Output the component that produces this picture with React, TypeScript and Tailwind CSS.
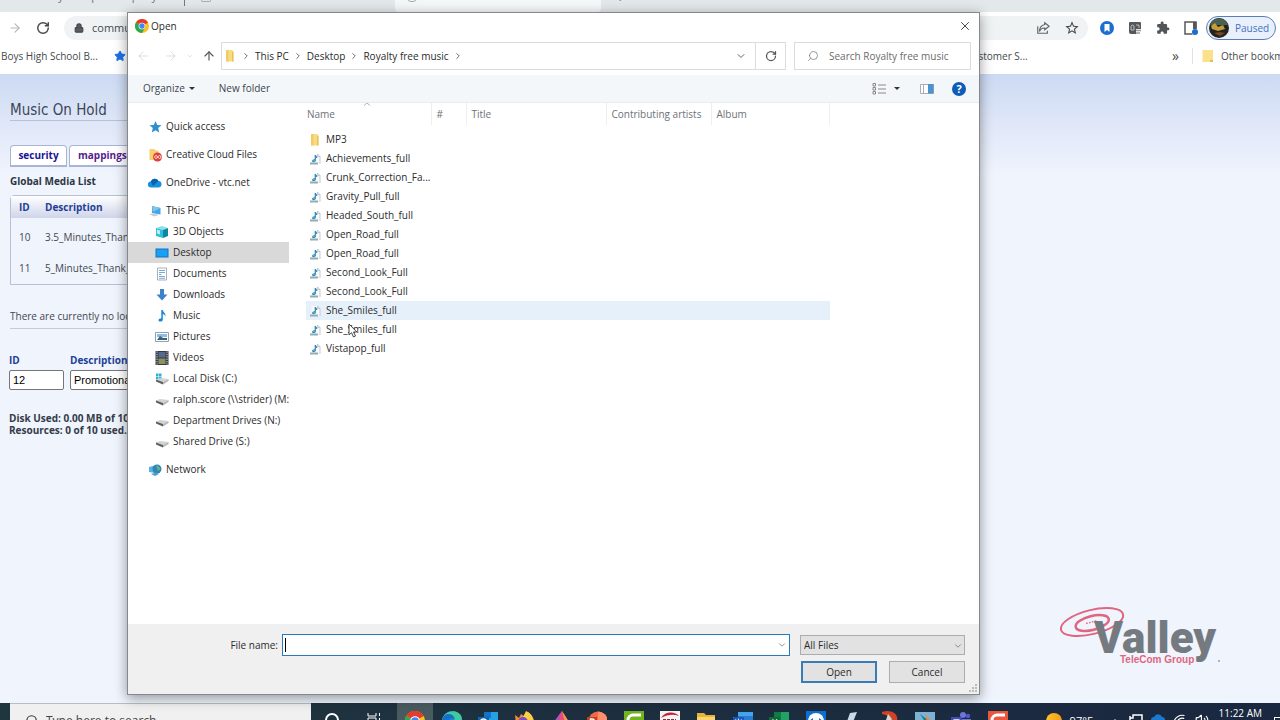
import type { ReactNode } from "react";
import {
  ArrowLeft,
  ArrowRight,
  ArrowUp,
  ChevronDown,
  ChevronRight,
  ChevronUp,
  Lock,
  RotateCw,
  Search,
  Star,
  Volume2,
  Wifi,
  X,
} from "lucide-react";
import { MdExtension, MdOutlineStarBorder } from "react-icons/md";

// ---------- Icons ----------

const ChromeIcon = ({ className = "" }: { className?: string }) => (
  <svg viewBox="0 0 20 20" className={className}>
    <circle cx="10" cy="10" r="10" fill="#fbc116" />
    <path d="M10 10L1.3 5A10 10 0 0 1 18.7 5z" fill="#e33b2e" />
    <path d="M10 10L1.3 5A10 10 0 0 0 10 20l4-7z" fill="#2da94f" />
    <circle cx="10" cy="10" r="4.8" fill="#fff" />
    <circle cx="10" cy="10" r="3.8" fill="#4285f4" />
  </svg>
);

const FolderIcon = () => (
  <svg viewBox="0 0 14 14" className="size-3.5 shrink-0">
    <path d="M3 1h6l1.500 1V12.500H3z" fill="#f8dc83" />
    <path d="M3 1h2.500v11.500H3z" fill="#f1cd63" />
    <path d="M9 3h1.500v9.500H9z" fill="#e9c15c" />
  </svg>
);

const AudioFileIcon = () => (
  <svg viewBox="0 0 14 14" className="size-3.5 shrink-0">
    <path d="M3.500 2h6L12 4.500V12H3.500z" fill="#f8fafb" />
    <path d="M9.500 2L12 4.500V12M9.500 2v2.500H12" fill="none" stroke="#b4bfc5" strokeWidth=".8" />
    <path d="M7.300 3v5.500c0 1-2.600 1.600-2.600.4 0-.9 1.300-1.200 2.600-.8M7.300 3c.2 1.500 1.700 1.400 1.400 3" fill="none" stroke="#2f87b8" strokeWidth="1.200" />
    <path d="M2 10.500h8v2H2z" fill="#93acb3" />
  </svg>
);

const DriveIcon = ({ windows = false }: { windows?: boolean }) => (
  <svg viewBox="0 0 14 14" className="size-3.5 shrink-0">
    {windows && <path d="M1 1.500h2.500V4H1zM4 1.500h2.500V4H4zM1 4.500h2.500V7H1zM4 4.500h2.500V7H4z" fill="#2cb3c9" />}
    <path d="M1 7.500l4-1.500 8.500 1L8 10z" fill="#d0d2d3" />
    <path d="M1 7.500l7 2.500v2.500L1 9.500z" fill="#5c5f61" />
    <path d="M8 10l5.500-3v2L8 12.500z" fill="#b4b7b8" />
  </svg>
);

const navIcons: Record<string, ReactNode> = {
  quick: <path d="M7.500 1l1.700 4 4.300.3-3.300 2.800 1 4.400-3.700-2.300-3.700 2.300 1-4.400L1.500 5.300 5.800 5z" fill="#2f8ed0" />,
  creative: (
    <>
      <path d="M1.500 1h5l1 1.500h3V12h-9z" fill="#f6d071" />
      <circle cx="9.500" cy="9" r="4.500" fill="#df4137" />
      <path d="M7 10a1.500 1.500 0 0 1 1-2.500c1.500 0 2 3 3.500 3a1.500 1.500 0 0 0 0-3c-1.500 0-2 3-3.500 3z" fill="none" stroke="#fff" strokeWidth=".8" />
    </>
  ),
  onedrive: (
    <>
      <path d="M3 11.500a3 3 0 0 1-.2-6A4.300 4.300 0 0 1 10.500 5a3.300 3.300 0 0 1 .5 6.500z" fill="#1490df" />
      <path d="M2.800 5.500A4.300 4.300 0 0 1 10.500 5L5 10z" fill="#0864b1" />
    </>
  ),
  pc: (
    <>
      <path d="M4 2l8.500 2v6.500L4 9z" fill="#42a5df" />
      <path d="M4 2l8.500 2L5 8z" fill="#79c6ee" />
      <path d="M1 10l5-.5 5 1.500-5 1.500z" fill="#c4cdd3" />
    </>
  ),
  objects: (
    <>
      <path d="M1 3l6-2 6 2-5 2z" fill="#8adfe9" />
      <path d="M1 3l7 2v8l-7-2z" fill="#2bc0d6" />
      <path d="M8 5l5-2v8l-5 2z" fill="#1283a3" />
      <path d="M2 4.500l3 1v4l-3-1z" fill="#bdf0f5" />
    </>
  ),
  desktop: (
    <>
      <path d="M.5 2.500h13v9H.5z" fill="#1272c4" />
      <path d="M1.500 3.500h11v7h-11z" fill="#18a0f2" />
    </>
  ),
  documents: (
    <>
      <path d="M2.500 1h9v12h-9z" fill="#fff" stroke="#a5b1ba" />
      <path d="M4 3.500h6M4 5.500h6M4 7.500h2.500M4 9.500h6M4 11.300h6" stroke="#6f9dc5" strokeWidth=".9" />
    </>
  ),
  downloads: <path d="M5 1h4v5.500h3.500L7 12.500 1.500 6.500H5z" fill="#3c82cb" />,
  music: <path d="M6.300 1h1.500c.2 2.500 3.500 3 2.400 6.500C9.800 5.500 8.500 5.300 7.800 5v5.700c0 2-4.300 2.800-4.300.6 0-1.500 1.600-2 2.800-1.700z" fill="#1886d1" />,
  pictures: (
    <>
      <path d="M.5 2.500h13v9H.5z" fill="#fff" stroke="#95a1aa" />
      <path d="M2 4h10v3H2z" fill="#8dbce5" />
      <path d="M2 10l3-4 3 2h4v2z" fill="#38617e" />
    </>
  ),
  videos: (
    <>
      <path d="M.5 0h13v14H.5z" fill="#343a43" />
      <path d="M3.500 1h7v5.500h-7z" fill="#57698e" />
      <path d="M3.500 7.500h7V13h-7z" fill="#8c925c" />
      <path d="M2 .5v13M12 .5v13" stroke="#e5e7e9" strokeDasharray="1.200 1.200" />
    </>
  ),
  network: (
    <>
      <path d="M1 4l6-1.500V10L1 9z" fill="#58b1df" />
      <circle cx="9" cy="6" r="4.500" fill="#2f86b7" />
      <path d="M8 2c2 1 4 2 4.500 4L10 8z" fill="#68b288" />
      <path d="M3 11l5-1.500 3 1.500-4 2z" fill="#4c9fcf" />
    </>
  ),
};

const NavIcon = ({ name }: { name: string }) => {
  if (name === "drive" || name === "local") return <DriveIcon windows={name === "local"} />;
  return (
    <svg viewBox="0 0 14 14" className="size-3.5 shrink-0">
      {navIcons[name]}
    </svg>
  );
};

// ---------- Data ----------

const navGroups = [
  [{ icon: "quick", label: "Quick access" }],
  [{ icon: "creative", label: "Creative Cloud Files" }],
  [{ icon: "onedrive", label: "OneDrive - vtc.net" }],
  [
    { icon: "pc", label: "This PC" },
    { icon: "objects", label: "3D Objects", child: true },
    { icon: "desktop", label: "Desktop", child: true, active: true },
    { icon: "documents", label: "Documents", child: true },
    { icon: "downloads", label: "Downloads", child: true },
    { icon: "music", label: "Music", child: true },
    { icon: "pictures", label: "Pictures", child: true },
    { icon: "videos", label: "Videos", child: true },
    { icon: "local", label: "Local Disk (C:)", child: true },
    { icon: "drive", label: "ralph.score (\\\\strider) (M:", child: true },
    { icon: "drive", label: "Department Drives (N:)", child: true },
    { icon: "drive", label: "Shared Drive (S:)", child: true },
  ],
  [{ icon: "network", label: "Network" }],
] as { icon: string; label: string; child?: boolean; active?: boolean }[][];

const files = [
  "MP3",
  "Achievements_full",
  "Crunk_Correction_Fa...",
  "Gravity_Pull_full",
  "Headed_South_full",
  "Open_Road_full",
  "Open_Road_full",
  "Second_Look_Full",
  "Second_Look_Full",
  "She_Smiles_full",
  "She_Smiles_full",
  "Vistapop_full",
];
const hoveredFile = 9;

const taskbarApps: ReactNode[] = [
  <>
    <circle cx="10" cy="10" r="10" fill="#1a88cf" />
    <path d="M0 10C1-2 19-3 20 8c0 4-6 5-7 2-1-5-9-5-13 0z" fill="#41c9a0" />
    <path d="M0 10C1 1 11 1 13 8c-5-3-9 2-6 11-5-1-7-5-7-9z" fill="#1671c6" />
  </>,
  <>
    <path d="M6 1h14v15H6z" fill="#28a1e4" />
    <path d="M6 1h7v6H6z" fill="#1274c4" />
    <path d="M0 6h11v11H0z" fill="#0d63b4" />
    <circle cx="5.500" cy="11" r="3" fill="none" stroke="#fff" strokeWidth="1.500" />
  </>,
  <>
    <path d="M1 4l4 3 2-4 4 3 3-5c4 3 7 7 6 12a9 9 0 0 1-18 0z" fill="#fa8b2b" />
    <path d="M12 0c5 2 8 7 7 12l-6 3c1-5-2-7-4-9z" fill="#fdcf42" />
    <circle cx="9" cy="11" r="5" fill="#7650c8" />
  </>,
  <>
    <path d="M11 0l7 11c0 9-15 9-15 0z" fill="#ea4c78" />
    <path d="M11 0L8 11 3 11z" fill="#aa58b5" />
    <path d="M11 0l3 11h4z" fill="#f69a4b" />
  </>,
  <>
    <circle cx="11" cy="10" r="9.500" fill="#ed6c47" />
    <path d="M11 .5a9.500 9.500 0 0 1 9.500 9.500H11z" fill="#ff8f6b" />
    <path d="M0 6h10v10H0z" fill="#c43e1c" />
    <path d="M3.500 14V8h2a1.800 1.800 0 0 1 0 3.600h-2" fill="none" stroke="#fff" strokeWidth="1.400" />
  </>,
  <>
    <path d="M0 0h20v20H0z" fill="#70b51f" />
    <path d="M17 4H9a5 5 0 0 0-5 5v6" fill="none" stroke="#fff" strokeWidth="3" />
  </>,
  <>
    <path d="M0 0h20v20H0z" fill="#f6f3f3" />
    <path d="M1 7c4-7 14-7 18-2-5-2-11-2-18 2z" fill="#c42138" />
    <path d="M3 9h13M3 11h13" stroke="#83323c" strokeWidth="2" strokeDasharray="3 1" />
  </>,
  <>
    <path d="M1 2h7l2 2h9v14H1z" fill="#e8b33b" />
    <path d="M1 6h18v12H1z" fill="#fbd66f" />
  </>,
  <>
    <path d="M5 1h15v16H5z" fill="#2b7cd3" />
    <path d="M5 1h15v4H5z" fill="#41a5ee" />
    <path d="M0 6h11v11H0z" fill="#185abd" />
    <path d="M2.500 8.500L4 14l1.500-5L7 14l1.500-5.500" fill="none" stroke="#fff" strokeWidth="1.200" />
  </>,
  <>
    <path d="M5 1h15v16H5z" fill="#21a366" />
    <path d="M5 1h7v8H5z" fill="#107c41" />
    <path d="M0 6h11v11H0z" fill="#0e6b38" />
    <path d="M3.500 8.500L8 14M8 8.500L3.500 14" stroke="#fff" strokeWidth="1.400" />
  </>,
  <>
    <path d="M0 0h20v20H0z" fill="#0f6fd1" />
    <circle cx="10" cy="10" r="8" fill="#fff" />
    <path d="M3 10l4-3v2h6V7l4 3-4 3v-2H7v2z" fill="#0f6fd1" />
  </>,
  <path d="M8 2l7-1-6 15H3z" fill="#c9d9e8" />,
  <>
    <path d="M3 1c8-3 17 1 15 9-2 5-6 7-9 7 8-7 4-12-6-14z" fill="#cf4424" />
    <path d="M9 3l4 5-3 6-3-5z" fill="#d9d5d1" />
  </>,
  <>
    <path d="M0 1h20v16H0z" fill="#7cb2d6" />
    <path d="M5 3l9 7v7z" fill="#177e94" />
    <path d="M10 3l6 7-3 4z" fill="#ea883d" />
  </>,
  <>
    <circle cx="12" cy="4" r="3" fill="#6d76d4" />
    <circle cx="17" cy="5" r="2.200" fill="#5059c9" />
    <path d="M6 8h14v9H6z" fill="#6d76d4" />
    <path d="M0 6h11v11H0z" fill="#444bb5" />
    <path d="M2.500 9h6M5.500 9v6" stroke="#fff" strokeWidth="1.500" />
  </>,
  <>
    <path d="M0 0h20v20H0z" fill="#e9573f" />
    <path d="M17 4H9a5 5 0 0 0-5 5v6" fill="none" stroke="#fff" strokeWidth="3" />
  </>,
];

// ---------- Browser window ----------

const BrowserChrome = () => (
  <header className="shrink-0 text-[#45494d]">
    <div className="flex h-3 overflow-hidden bg-[#e3e8ea] pl-1 text-[11px] leading-4">
      <span className="-mt-3 w-[180px] shrink-0 text-[#777]">Community · Simple company</span>
      <div className="mr-4 h-1.5 border-l border-[#777]" />
      <div className="h-0.5 w-2.5 rounded-b border border-t-0 border-[#aaa]" />
      <div className="-mt-1 ml-[184px] flex h-4 w-[206px] items-start rounded-b bg-[#f5f8f9] pl-3">
        <div className="h-1.5 w-2.5 rounded-b border border-[#aaa]" />
      </div>
      <span className="-mt-2.5 ml-4">+</span>
    </div>

    <div className="flex h-8 items-center bg-white pl-2">
      <ArrowRight className="size-3.5 shrink-0 text-[#b5b7ba]" strokeWidth={2} />
      <button aria-label="Reload" className="ml-3.5 shrink-0">
        <RotateCw className="size-3.5 text-[#45484b]" strokeWidth={2.5} />
      </button>
      <div className="ml-3.5 flex h-6 flex-1 items-center rounded-full bg-[#f0f3f4] pl-2.5 pr-2 text-[11px]">
        <Lock className="size-2.5 fill-[#5a5d60]" strokeWidth={3} />
        <span className="ml-2 flex-1">community.vtc.net</span>
        <svg viewBox="0 0 16 16" className="mr-3.5 size-3.5" fill="none" stroke="#5f6367" strokeWidth="1.300">
          <path d="M2 6v8h11v-3M10 2l5 4-5 4V8C7 8 5 9 4 12c0-4 2-7 6-8z" />
        </svg>
        <MdOutlineStarBorder className="size-4" />
      </div>
      <div className="flex shrink-0 items-center gap-3.5 pl-3 pr-2">
        <svg viewBox="0 0 14 14" className="size-3.5">
          <circle cx="7" cy="7" r="7" fill="#1b6dd0" />
          <path d="M4.500 3h5v8L7 9l-2.500 2z" fill="#fff" />
        </svg>
        <svg viewBox="0 0 14 14" className="size-3.5">
          <path d="M1 2q0-1 1-1h10q1 0 1 1v6H8v5H3q-2 0-2-2z" fill="#55585a" />
          <path d="M3 5q2-2 3 0v4H3zM8 4h3v3" fill="none" stroke="#b9bbbd" />
          <path d="M8 9.500h5M8 12h4" stroke="#999" strokeWidth="1.500" />
        </svg>
        <MdExtension className="size-3.5 text-[#525558]" />
        <svg viewBox="0 0 14 14" className="size-3.5">
          <path d="M8.500 13H1V1h11v7" fill="none" stroke="#55585a" strokeWidth="1.500" />
          <path d="M9 1h3.500v7H9z" fill="#55585a" />
          <circle cx="11" cy="11" r="3" fill="#1b6dd0" />
        </svg>
      </div>
      <button className="mr-1 flex h-6 w-[70px] shrink-0 items-center gap-1.5 rounded-full border border-[#5a7eb5] bg-[#e9effb] pl-0.5 text-[10px] text-[#4272c4]">
        <svg viewBox="0 0 20 20" className="size-5">
          <circle cx="10" cy="10" r="10" fill="#20251f" />
          <path d="M1 7a9.500 9.500 0 0 1 18 0z" fill="#47624f" />
          <path d="M2 8l4-3 3 4 5-2 2 4-7 2-6-2z" fill="#c89a3a" />
          <path d="M5 15l6-1 5 1-5 3z" fill="#7a451f" />
        </svg>
        Paused
      </button>
    </div>

    <div className="flex h-[30px] items-center bg-white pb-1.5 text-[10px]">
      <span className="w-[114px] shrink-0 pl-px">Boys High School B...</span>
      <Star className="size-3 fill-[#1a73e8] text-[#1a73e8]" />
      <span className="ml-auto w-[206px]">Customer S...</span>
      <span className="w-[20px] text-sm leading-none">»</span>
      <div className="mr-2 h-4 border-l border-[#dde2ea]" />
      <svg viewBox="0 0 14 14" className="mr-1.5 size-3.5">
        <path d="M1.500 1H12v12H1.500z" fill="#fbe08d" />
        <path d="M9 11h3v2H9z" fill="#e3bd53" />
      </svg>
      <span className="w-[59px] overflow-hidden whitespace-nowrap">Other bookmarks</span>
    </div>
  </header>
);

const MusicOnHoldPage = () => (
  <main className="flex-1 overflow-hidden bg-[#eff4fd] bg-gradient-to-b from-[#cbdaf3] via-[#e0e7f8] via-[8%] to-[#eff4fd] to-[16%] pl-2.5 text-[10px] text-[#44484f]">
    <div className="max-w-3xl">
      <h1 className="mt-[26px] border-b border-[#b5c1d5] font-['DejaVu_Sans_Condensed','DejaVu_Sans',sans-serif] text-[15px] leading-5 text-[#3b4659]">
        Music On Hold
      </h1>
      <nav className="mt-6 flex gap-0.5 font-bold">
        <a href="#security" className="flex h-[22px] w-[57px] items-center justify-center rounded-t border border-b-2 border-[#aab5d6] bg-white text-[#1a1499]">
          security
        </a>
        <a href="#mappings" className="flex h-[22px] items-center rounded-t border border-b-2 border-[#aab5d6] bg-white px-2 text-[#56218f]">
          mappings
        </a>
      </nav>
      <h2 className="mt-2 font-bold leading-3 text-[#2d3646]">Global Media List</h2>
      <table className="mt-2 w-full border-separate border-spacing-0 rounded-t border border-[#b7c0d4] text-left">
        <thead>
          <tr className="h-[22px] bg-gradient-to-b from-white to-[#cfd5ea] text-[#233f96]">
            <th className="w-[34px] pl-2">ID</th>
            <th>Description</th>
          </tr>
        </thead>
        <tbody className="whitespace-nowrap">
          <tr className="h-[38px]">
            <td className="pl-2">10</td>
            <td>3.5_Minutes_Thank_You</td>
          </tr>
          <tr className="h-7">
            <td className="pb-1 pl-2">11</td>
            <td className="pb-1">5_Minutes_Thank_You</td>
          </tr>
        </tbody>
      </table>
      <p className="mt-6 border-b border-[#c3ccda] pb-1">There are currently no local resources.</p>
      <form className="-ml-px mt-6 flex gap-1.5 whitespace-nowrap font-bold text-[#233f96]">
        <label className="flex w-[55px] shrink-0 flex-col gap-0.5">
          ID
          <input defaultValue="12" className="h-5 rounded-xs border border-[#777] bg-white px-[3px] font-['Liberation_Sans',sans-serif] text-[11px] font-normal text-black" />
        </label>
        <label className="flex w-60 flex-col gap-0.5">
          Description
          <input defaultValue="Promotional" className="h-5 rounded-xs border border-[#777] bg-white px-[3px] font-['Liberation_Sans',sans-serif] text-[11px] font-normal text-black" />
        </label>
      </form>
      <p className="-ml-px mt-[22px] font-bold leading-3 text-[#343b48]">
        Disk Used: 0.00 MB of 10.00 MB.
        <br />
        Resources: 0 of 10 used.
      </p>
    </div>
  </main>
);

// Watermark in the lower right corner
const ValleyLogo = () => (
  <svg viewBox="0 0 170 60" className="absolute bottom-[55px] right-[52px] w-[170px]" role="img" aria-label="Valley TeleCom Group">
    <g fill="none" stroke="#e0667f" transform="rotate(-14 34 17)">
      <ellipse cx="34" cy="17" rx="32" ry="12" strokeWidth="2" />
      <ellipse cx="34" cy="18" rx="17" ry="7" strokeWidth="2.500" />
      <path d="M28 17h12" strokeWidth="1.500" strokeDasharray="1.500 1.500" />
    </g>
    <text x="36" y="48" className="fill-[#747a80] font-['Roboto',sans-serif] text-[44px] font-black">
      Valley
    </text>
    <text x="62" y="58" className="fill-[#e0667f] font-['Liberation_Sans',sans-serif] text-[10px] font-bold">
      TeleCom Group
    </text>
    <circle cx="161" cy="56" r="1" fill="#9a9fa4" />
  </svg>
);

// ---------- File dialog ----------

const DialogHeader = () => (
  <>
    <div className="flex h-[26px] items-center px-[7px]">
      <ChromeIcon className="size-3.5" />
      <h2 className="ml-0.5 flex-1">Open</h2>
      <button aria-label="Close">
        <X className="size-3.5 text-[#333]" strokeWidth={1.5} />
      </button>
    </div>

    <div className="mt-[3px] flex h-7 items-center pr-2">
      <div className="flex w-[93px] shrink-0 items-center pl-2 text-[#d6d8da]">
        <ArrowLeft className="size-3.5" strokeWidth={1.5} />
        <ArrowRight className="ml-3.5 size-3.5" strokeWidth={1.5} />
        <ChevronDown className="ml-2 size-2" />
        <ArrowUp className="ml-2 size-3.5 text-[#555]" strokeWidth={2} />
      </div>
      <div className="flex h-full flex-1 items-center border border-[#dcdcdc] pl-px">
        <FolderIcon />
        {["This PC", "Desktop", "Royalty free music"].map((part) => (
          <div key={part} className="flex items-center">
            <ChevronRight className="mx-1 size-2.5 text-[#555]" />
            <span>{part}</span>
          </div>
        ))}
        <ChevronRight className="mx-1 size-2.5 text-[#555]" />
        <ChevronDown className="ml-auto mr-2 size-3 text-[#666]" />
        <button aria-label="Refresh" className="flex h-full w-[30px] items-center justify-center border-l border-[#dcdcdc]">
          <RotateCw className="size-3 text-[#555]" strokeWidth={2.5} />
        </button>
      </div>
      <label className="ml-2 flex h-full w-[177px] items-center border border-[#dcdcdc] pl-3">
        <Search className="size-3 -scale-x-100 text-[#777]" strokeWidth={1.5} />
        <input aria-label="Search" placeholder="Search Royalty free music" className="ml-2.5 w-[140px] outline-none placeholder:text-[#6b6b6b]" />
      </label>
    </div>

    <div className="mt-[5px] flex h-7 items-center border-b border-[#e7ecee] bg-[#f4f7f9] pl-[15px] pr-[13px] text-[#3b444e]">
      <button className="flex items-center gap-1">
        Organize
        <span className="border-x-3 border-t-3 border-x-transparent border-t-[#333]" />
      </button>
      <button className="ml-6">New folder</button>
      <svg viewBox="0 0 14 14" className="ml-auto size-3.5" fill="none" stroke="#888">
        <path d="M1 1.500h2.500v2.500H1zM1 5.500h2.500V8H1zM1 9.500h2.500V12H1zM6 3h8M6 7h8M6 11h8" />
      </svg>
      <span className="ml-2 mr-5 border-x-3 border-t-3 border-x-transparent border-t-[#333]" />
      <svg viewBox="0 0 14 14" className="mr-[18px] size-3.5">
        <path d="M.5 2.500h13v9H.5zM3.500 2.500v9" fill="#fff" stroke="#aab" />
        <path d="M8 2h5.500v9.500H8z" fill="#4c92cc" />
      </svg>
      <button aria-label="Help" className="size-3.5 rounded-full bg-[#0d5cb5] text-[11px] font-bold leading-3 text-white">
        ?
      </button>
    </div>
  </>
);

const NavPane = () => (
  <nav className="flex w-[161px] shrink-0 flex-col gap-[7px] overflow-hidden pt-[13px]">
    {navGroups.map((group, i) => (
      <ul key={i}>
        {group.map((item) => (
          <li
            key={item.label}
            className={`flex h-[21px] items-center gap-1 whitespace-nowrap ${item.child ? "pl-[27px]" : "pl-5"} ${
              item.active ? "bg-[#d9d9d9]" : ""
            }`}
          >
            <NavIcon name={item.icon} />
            {item.label}
          </li>
        ))}
      </ul>
    ))}
  </nav>
);

const FileList = () => (
  <table className="ml-[17px] w-[524px] table-fixed self-start text-left">
    <thead>
      <tr className="h-[22px] text-[#6d7278] *:border-r *:border-[#eceff1] *:font-normal">
        <th className="relative w-[125px] pl-px">
          Name
          <ChevronUp className="absolute -top-1 left-14 size-2.5" strokeWidth={1.5} />
        </th>
        <th className="w-[35px] pl-[5px]">#</th>
        <th className="w-[140px] pl-[5px]">Title</th>
        <th className="w-[105px] whitespace-nowrap pl-[5px]">Contributing artists</th>
        <th className="pl-[5px]">Album</th>
      </tr>
    </thead>
    <tbody>
      <tr className="h-[5px]" />
      {files.map((name, i) => (
        <tr key={i} className={i === hoveredFile ? "h-[19px] bg-[#e6f0fa]" : "h-[19px]"}>
          <td colSpan={5} className="p-0">
            <div className="flex items-center gap-1 pl-0.5 leading-[19px]">
              {i === 0 ? <FolderIcon /> : <AudioFileIcon />}
              {name}
            </div>
          </td>
        </tr>
      ))}
    </tbody>
  </table>
);

const DialogFooter = () => (
  <form className="flex h-[70px] shrink-0 flex-col gap-[5px] bg-[#f0f0f0] pr-3.5 pt-2.5">
    <div className="flex items-center">
      <label htmlFor="file-name" className="w-[154px] pr-1 text-right">
        File name:
      </label>
      <div className="flex h-[22px] flex-1 items-center border border-[#2a7ab8] bg-white pl-0.5 pr-0.5">
        <span className="h-3.5 border-l border-black" />
        <input id="file-name" className="h-full flex-1 outline-none" />
        <ChevronDown className="size-2.5 text-[#555]" strokeWidth={1.5} />
      </div>
      <div className="relative ml-2.5 w-[165px]">
        <select aria-label="File type" className="block h-5 w-full appearance-none border border-[#adadad] bg-[#e2e2e2] pl-[3px]">
          <option>All Files</option>
        </select>
        <ChevronDown className="pointer-events-none absolute right-0.5 top-1.5 size-2.5 text-[#555]" strokeWidth={1.5} />
      </div>
    </div>
    <div className="flex justify-end gap-3">
      <button type="button" className="h-[22px] w-[76px] border-2 border-[#3c7cb2] bg-[#e2e2e2]">
        Open
      </button>
      <button type="button" className="h-[22px] w-[76px] border border-[#adadad] bg-[#e2e2e2]">
        Cancel
      </button>
    </div>
  </form>
);

const OpenDialog = () => (
  <section
    role="dialog"
    aria-label="Open"
    className="absolute bottom-[25px] left-[127px] right-[300px] top-3 flex flex-col border border-[#85898d] bg-white text-[10px] text-[#2b2b2b] shadow-[0_3px_12px_rgba(0,0,0,0.4)]"
  >
    <DialogHeader />
    <div className="flex flex-1 overflow-hidden">
      <NavPane />
      <FileList />
    </div>
    <DialogFooter />
    <svg viewBox="0 0 8 8" className="absolute bottom-0.5 right-0.5 size-2" fill="#bbb">
      <path d="M6 0h2v2H6zM6 3h2v2H6zM3 3h2v2H3zM6 6h2v2H6zM3 6h2v2H3zM0 6h2v2H0z" />
    </svg>
  </section>
);

// ---------- Taskbar ----------

const Taskbar = () => (
  <footer className="h-[17px] shrink-0 overflow-hidden bg-gradient-to-r from-[#20363e] to-[#1a2740]">
    <div className="flex h-[34px] items-start text-white">
      <label className="ml-2.5 flex h-full w-[301px] shrink-0 items-center border-t border-[#b9bdc0] bg-[#f0f0f0] pl-3.5">
        <Search className="size-3.5 -scale-x-100 text-[#333]" />
        <input aria-label="Search" placeholder="Type here to search" className="ml-2 w-40 text-xs outline-none placeholder:text-[#444]" />
      </label>
      <div className="flex w-[86px] shrink-0 justify-between pl-3.5 pr-4 pt-2.5">
        <svg viewBox="0 0 14 14" className="size-3.5" fill="none" stroke="#fff" strokeWidth="2">
          <circle cx="7" cy="7" r="6" />
        </svg>
        <svg viewBox="0 0 14 14" className="size-3.5" fill="none" stroke="#fff">
          <path d="M1 0v3h8V0M1 14V5h8v9M12.500 0v3M12.500 5v9" />
        </svg>
      </div>
      <div className="grid w-[619px] shrink-0 grid-cols-17">
        <div className="flex h-8 justify-center bg-[#4a5b60] pt-2">
          <ChromeIcon className="size-5" />
        </div>
        {taskbarApps.map((art, i) => (
          <div key={i} className="flex justify-center pt-2">
            <svg viewBox="0 0 20 20" className="size-5">
              {art}
            </svg>
          </div>
        ))}
      </div>
      <div className="ml-auto flex h-8 shrink-0 items-start gap-2 pt-2.5 text-[10px] leading-4">
        <span className="size-4 rounded-full bg-gradient-to-r from-[#fcc329] to-[#f29b1d]" />
        <span className="mr-2 text-[11px]">97°F</span>
        <ChevronUp className="mt-0.5 size-3" />
        <svg viewBox="0 0 14 14" className="size-3.5" fill="none" stroke="#fff" strokeWidth="1.500">
          <path d="M1 5h3V2h9v7H5M1 3v7h4" />
        </svg>
        <svg viewBox="0 0 14 10" className="w-3.5" fill="#1878d2">
          <path d="M3 10a3 3 0 0 1 0-6 4.300 4.300 0 0 1 8 0 3 3 0 0 1 0 6z" />
        </svg>
        <Wifi className="size-3.5 rotate-[-30deg]" />
        <Volume2 className="size-3.5" />
        <span className="-mt-2 ml-0.5">11:22 AM</span>
        <span className="ml-1 mt-1 h-3 w-1.5 border border-r-0 border-white" />
      </div>
    </div>
  </footer>
);

export default function App() {
  return (
    <div className="relative flex h-screen flex-col overflow-hidden font-['Open_Sans','Noto_Sans',sans-serif]">
      <BrowserChrome />
      <MusicOnHoldPage />
      <Taskbar />
      <ValleyLogo />
      <OpenDialog />
      {/* Mouse pointer */}
      <svg viewBox="0 0 10 16" className="absolute left-[348px] top-[323px] h-4" fill="#fff" stroke="#333" strokeWidth=".9">
        <path d="M1 1v11l2.500-2.300L5.500 14l2-1-2-4h3.300z" />
      </svg>
    </div>
  );
}
